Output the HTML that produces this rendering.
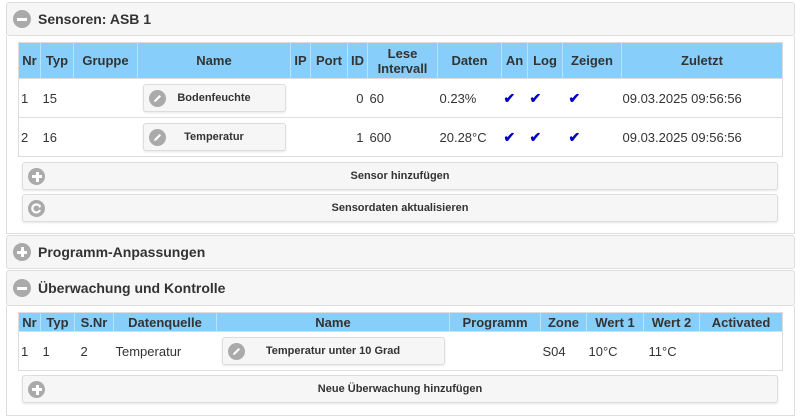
<!DOCTYPE html>
<html><head><meta charset="utf-8"><style>
*{box-sizing:border-box;margin:0;padding:0}
body{width:800px;height:411px;overflow:hidden;background:#fff;font-family:"Liberation Sans",Arial,sans-serif;color:#333;position:relative}
.hd{position:absolute;left:6px;width:789px;background:#f6f6f6;border:1px solid #ddd;border-radius:3px;font-weight:bold;font-size:14px;color:#333}
.hd span{position:absolute;left:31px;top:50%;transform:translateY(-50%)}
.ci{position:absolute;left:6px;top:50%;margin-top:-9px;width:18px;height:18px;border-radius:50%;background:#aaa}
.ci.m::after{content:"";position:absolute;left:4px;top:7.5px;width:10px;height:3px;background:#fff}
.ci.p::after{content:"";position:absolute;left:4px;top:7.5px;width:10px;height:3px;background:#fff}
.ci.p::before{content:"";position:absolute;left:7.5px;top:4px;width:3px;height:10px;background:#fff}
.body{position:absolute;left:6px;width:789px;background:#fff;border:1px solid #ddd;border-top:none}
table{position:absolute;left:18px;border-collapse:collapse;table-layout:fixed;font-size:13px}
th{background:#87cefa;font-weight:bold;font-size:13px;color:#333;border-left:1px solid #b9e2fb;text-align:center;line-height:15px;padding:0}
th:first-child{border-left:none}
td{padding:0 0 0 2px;color:#333;border-top:1px solid #ddd}
table{border:1px solid #ddd}
.nb{display:block;position:relative;height:28px;background:#f6f6f6;border:1px solid #ddd;border-radius:3px;font-weight:bold;font-size:11px;text-align:center;line-height:26px;color:#333;box-shadow:0 1px 2px rgba(0,0,0,.1)}
.pen{position:absolute;left:5px;top:5px;width:17px;height:17px;border-radius:50%;background:#aaa}
.pen svg{position:absolute;left:0;top:0}
.bb{position:absolute;left:22px;width:756px;height:28px;background:#f6f6f6;border:1px solid #ddd;border-radius:3px;font-weight:bold;font-size:11px;text-align:center;line-height:26px;box-shadow:0 1px 2px rgba(0,0,0,.1)}
.bb .ci{left:5px;margin-top:-8.5px;width:17px;height:17px}
.ck{color:#0000cc;font-size:14px;font-weight:bold}
</style></head><body>
<div class="hd" style="top:2px;height:34px"><div class="ci m"></div><span>Sensoren: ASB 1</span></div>
<div class="body" style="top:36px;height:198px"></div>
<table style="top:42px;width:764px">
<colgroup><col style="width:22px"><col style="width:33px"><col style="width:64px"><col style="width:153px"><col style="width:20px"><col style="width:37px"><col style="width:20px"><col style="width:70px"><col style="width:64px"><col style="width:26px"><col style="width:35px"><col style="width:59px"><col style="width:161px"></colgroup>
<tr style="height:36px"><th>Nr</th><th>Typ</th><th>Gruppe</th><th>Name</th><th>IP</th><th>Port</th><th>ID</th><th>Lese<br>Intervall</th><th>Daten</th><th>An</th><th>Log</th><th>Zeigen</th><th>Zuletzt</th></tr>
<tr style="height:39px"><td>1</td><td>15</td><td></td><td style="padding:0 5px"><span class="nb"><span class="pen"><svg width="17" height="17"><path d="M5 12 L5.5 10 L10.5 5 L12 6.5 L7 11.5 Z" fill="#fff"/></svg></span>Bodenfeuchte</span></td><td></td><td></td><td style="text-align:right;padding-right:4px">0</td><td>60</td><td>0.23%</td><td class="ck">✔</td><td class="ck">✔</td><td class="ck" style="padding-left:6px">✔</td><td style="padding-left:1px">09.03.2025 09:56:56</td></tr>
<tr style="height:39px"><td>2</td><td>16</td><td></td><td style="padding:0 5px"><span class="nb"><span class="pen"><svg width="17" height="17"><path d="M5 12 L5.5 10 L10.5 5 L12 6.5 L7 11.5 Z" fill="#fff"/></svg></span>Temperatur</span></td><td></td><td></td><td style="text-align:right;padding-right:4px">1</td><td>600</td><td>20.28°C</td><td class="ck">✔</td><td class="ck">✔</td><td class="ck" style="padding-left:6px">✔</td><td style="padding-left:1px">09.03.2025 09:56:56</td></tr>
</table>
<div class="bb" style="top:162px"><div class="ci p"></div>Sensor hinzufügen</div>
<div class="bb" style="top:194px"><div class="ci" style="background:#aaa"><svg width="17" height="17" style="position:absolute;left:0;top:0"><path d="M11.5 6 A4 4 0 1 0 12 10" stroke="#fff" stroke-width="2.2" fill="none"/><path d="M9.5 4.5 L13 5 L12 8.5 Z" fill="#fff"/></svg></div>Sensordaten aktualisieren</div>
<div class="hd" style="top:235px;height:34px"><div class="ci p"></div><span>Programm-Anpassungen</span></div>
<div class="hd" style="top:270px;height:36px"><div class="ci m"></div><span>Überwachung und Kontrolle</span></div>
<div class="body" style="top:306px;height:110px"></div>
<table style="top:312px;width:764px">
<colgroup><col style="width:22px"><col style="width:34px"><col style="width:39px"><col style="width:103px"><col style="width:233px"><col style="width:91px"><col style="width:46px"><col style="width:57px"><col style="width:56px"><col style="width:83px"></colgroup>
<tr style="height:19px"><th>Nr</th><th>Typ</th><th>S.Nr</th><th>Datenquelle</th><th>Name</th><th>Programm</th><th>Zone</th><th>Wert 1</th><th>Wert 2</th><th>Activated</th></tr>
<tr style="height:39px"><td>1</td><td>1</td><td style="padding-left:6px">2</td><td>Temperatur</td><td style="padding:0 5px"><span class="nb"><span class="pen"><svg width="17" height="17"><path d="M5 12 L5.5 10 L10.5 5 L12 6.5 L7 11.5 Z" fill="#fff"/></svg></span>Temperatur unter 10 Grad</span></td><td></td><td>S04</td><td>10°C</td><td style="padding-left:5px">11°C</td><td></td></tr>
</table>
<div class="bb" style="top:375px"><div class="ci p"></div>Neue Überwachung hinzufügen</div>
</body></html>
